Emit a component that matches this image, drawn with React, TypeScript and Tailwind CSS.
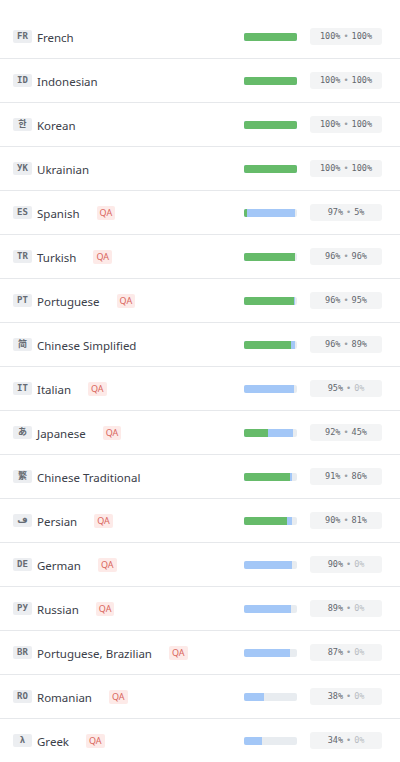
const langs = [
  { code: "FR", name: "French", qa: false, t: 100, a: 100 },
  { code: "ID", name: "Indonesian", qa: false, t: 100, a: 100 },
  { code: "한", name: "Korean", qa: false, t: 100, a: 100 },
  { code: "УК", name: "Ukrainian", qa: false, t: 100, a: 100 },
  { code: "ES", name: "Spanish", qa: true, t: 97, a: 5 },
  { code: "TR", name: "Turkish", qa: true, t: 96, a: 96 },
  { code: "PT", name: "Portuguese", qa: true, t: 96, a: 95 },
  { code: "简", name: "Chinese Simplified", qa: false, t: 96, a: 89 },
  { code: "IT", name: "Italian", qa: true, t: 95, a: 0 },
  { code: "あ", name: "Japanese", qa: true, t: 92, a: 45 },
  { code: "繁", name: "Chinese Traditional", qa: false, t: 91, a: 86 },
  { code: "ف", name: "Persian", qa: true, t: 90, a: 81, arabic: true },
  { code: "DE", name: "German", qa: true, t: 90, a: 0 },
  { code: "РУ", name: "Russian", qa: true, t: 89, a: 0 },
  { code: "BR", name: "Portuguese, Brazilian", qa: true, t: 87, a: 0 },
  { code: "RO", name: "Romanian", qa: true, t: 38, a: 0 },
  { code: "λ", name: "Greek", qa: true, t: 34, a: 0 },
];

function Bar({ t, a }: { t: number; a: number }) {
  return (
    <div className="relative h-[8px] w-[53px] overflow-hidden rounded-[2px] bg-[#e8ecf0]">
      <div className="absolute inset-y-0 left-0 bg-[#a3c7f7]" style={{ width: `${t}%` }} />
      <div className="absolute inset-y-0 left-0 bg-[#66bb6a]" style={{ width: `${a}%` }} />
    </div>
  );
}

export default function App() {
  return (
    <div className="min-h-[762px] bg-white pt-[15px] font-['Noto_Sans','Noto_Sans_CJK_SC',sans-serif]">
      {langs.map((l) => (
        <div
          key={l.name}
          className="flex h-[44px] items-center border-b border-[#e6e8eb] pl-[13px] pr-[18px]"
        >
          <span
            className={
              l.arabic
                ? "flex h-[13px] min-w-[19px] items-center justify-center rounded-[2px] bg-[#eceef1] px-[2px] font-['DejaVu_Sans',sans-serif] text-[9px] font-bold text-[#666b73]"
                : "flex h-[13px] min-w-[19px] items-center justify-center rounded-[2px] bg-[#eceef1] px-[2px] font-['DejaVu_Sans_Mono','Noto_Sans_CJK_SC',monospace] text-[9px] font-bold text-[#666b73]"
            }
          >
            {l.code}
          </span>
          <span className="ml-[5px] pt-[2px] text-[11.5px] text-[#3b4049]">{l.name}</span>
          {l.qa && (
            <span className="ml-[17px] flex h-[14px] items-center rounded-[2px] bg-[#fdeae8] px-[3px] text-[9px] text-[#d9655c]">
              QA
            </span>
          )}
          <div className="ml-auto flex items-center gap-[13px]">
            <Bar t={l.t} a={l.a} />
            <div className="flex h-[17px] w-[72px] items-center justify-center rounded-[3px] bg-[#f3f4f5] font-['DejaVu_Sans_Mono',monospace] text-[8.5px] text-[#62666d]">
              <span>{l.t}%</span>
              <span className="mx-[3px] text-[#9aa0a6]">•</span>
              <span className={l.a === 0 ? "text-[#b8bcc2]" : ""}>{l.a}%</span>
            </div>
          </div>
        </div>
      ))}
    </div>
  );
}
